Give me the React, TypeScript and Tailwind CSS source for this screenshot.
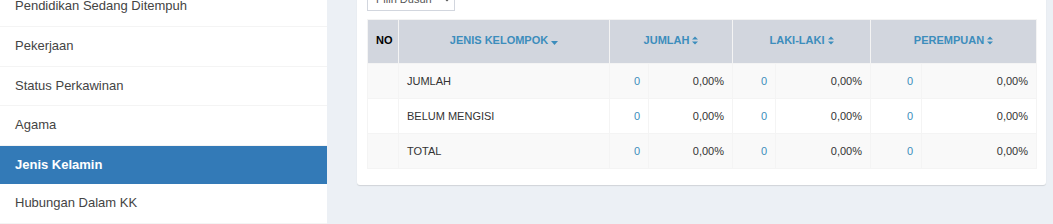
import React from 'react'

const menu = [
  { label: 'Pendidikan Sedang Ditempuh', h: 'h-[40px]' },
  { label: 'Pekerjaan', h: 'h-[40px]' },
  { label: 'Status Perkawinan', h: 'h-[39px]' },
  { label: 'Agama', h: 'h-[40px]' },
  { label: 'Jenis Kelamin', h: 'h-[38px]' },
  { label: 'Hubungan Dalam KK', h: 'h-[40px]' },
]

const rows = ['JUMLAH', 'BELUM MENGISI', 'TOTAL']

function SortIcon({ color = '#3c8dbc' }: { color?: string }) {
  return (
    <svg width="6" height="9" viewBox="0 0 6 9" className="inline-block ml-[3px] -mt-[2px] align-middle">
      <path d="M0 3.6 L3 0.4 L6 3.6 Z M0 5.4 L3 8.6 L6 5.4 Z" fill={color} />
    </svg>
  )
}

function CaretDown() {
  return (
    <svg width="7" height="4" viewBox="0 0 7 4" className="inline-block ml-[3px] mt-[3px] align-middle">
      <path d="M0 0 L7 0 L3.5 4 Z" fill="#3c8dbc" />
    </svg>
  )
}

export default function App() {
  return (
    <div
      className="flex h-[224px] w-[1053px] overflow-hidden bg-[#ecf0f5] text-[#333]"
      style={{ fontFamily: '"Liberation Sans", Arial, sans-serif' }}
    >
      {/* menu kiri */}
      <div className="w-[327px] shrink-0 bg-white">
        <div className="-mt-[13px]">
          {menu.map((m) => {
            const active = m.label === 'Jenis Kelamin'
            return (
              <div
                key={m.label}
                className={
                  active
                    ? `${m.h} flex items-center px-[15px] pb-[1px] bg-[#337ab7] text-white font-bold text-[13px]`
                    : `${m.h} flex items-center px-[15px] pb-[1px] border-b border-[#f4f4f4] text-[#444] text-[13px]`
                }
              >
                {m.label}
              </div>
            )
          })}
        </div>
      </div>

      {/* box tabel */}
      <div className="ml-[30px] w-[689px] shrink-0 self-start -mt-[33px] bg-white rounded-[3px] shadow-[0_1px_1px_rgba(0,0,0,0.12)] px-[10px] pt-[10px] pb-4">
        <div className="w-[88px] h-[34px] border border-[#d2d6de] flex items-end justify-between pl-[8px] pr-[4px] pb-[4px] text-[11px] leading-[13px] text-[#555] whitespace-nowrap">
          <span>Pilih Dusun</span>
          <span className="mb-[2px]">
            <SortIcon color="#555" />
          </span>
        </div>

        <table className="mt-2 w-[669px] table-fixed border-collapse text-[11px]">
          <colgroup>
            <col className="w-[31px]" />
            <col className="w-[211px]" />
            <col className="w-[39px]" />
            <col className="w-[84px]" />
            <col className="w-[43px]" />
            <col className="w-[95px]" />
            <col className="w-[51px]" />
            <col className="w-[115px]" />
          </colgroup>
          <thead>
            <tr className="h-[44px] bg-[#d2d6de] font-bold">
              <th className="border border-[#f4f4f4] px-2 pb-[2px] text-left text-black">NO</th>
              <th className="border border-[#f4f4f4] px-2 pb-[2px] text-center text-[#3c8dbc]">
                JENIS KELOMPOK
                <CaretDown />
              </th>
              <th colSpan={2} className="border border-[#f4f4f4] px-2 pb-[2px] text-center text-[#3c8dbc]">
                JUMLAH
                <SortIcon />
              </th>
              <th colSpan={2} className="border border-[#f4f4f4] px-2 pb-[2px] text-center text-[#3c8dbc]">
                LAKI-LAKI
                <SortIcon />
              </th>
              <th colSpan={2} className="border border-[#f4f4f4] px-2 pb-[2px] text-center text-[#3c8dbc]">
                PEREMPUAN
                <SortIcon />
              </th>
            </tr>
          </thead>
          <tbody>
            {rows.map((r, i) => (
              <tr key={r} className={i % 2 === 0 ? 'h-[35px] bg-[#f9f9f9]' : 'h-[35px] bg-white'}>
                <td className="border border-[#f4f4f4] px-2"></td>
                <td className="border border-[#f4f4f4] px-2">{r}</td>
                <td className="border border-[#f4f4f4] px-2 text-right text-[#3c8dbc]">0</td>
                <td className="border border-[#f4f4f4] px-2 text-right">0,00%</td>
                <td className="border border-[#f4f4f4] px-2 text-right text-[#3c8dbc]">0</td>
                <td className="border border-[#f4f4f4] px-2 text-right">0,00%</td>
                <td className="border border-[#f4f4f4] px-2 text-right text-[#3c8dbc]">0</td>
                <td className="border border-[#f4f4f4] px-2 text-right">0,00%</td>
              </tr>
            ))}
          </tbody>
        </table>
      </div>
    </div>
  )
}
